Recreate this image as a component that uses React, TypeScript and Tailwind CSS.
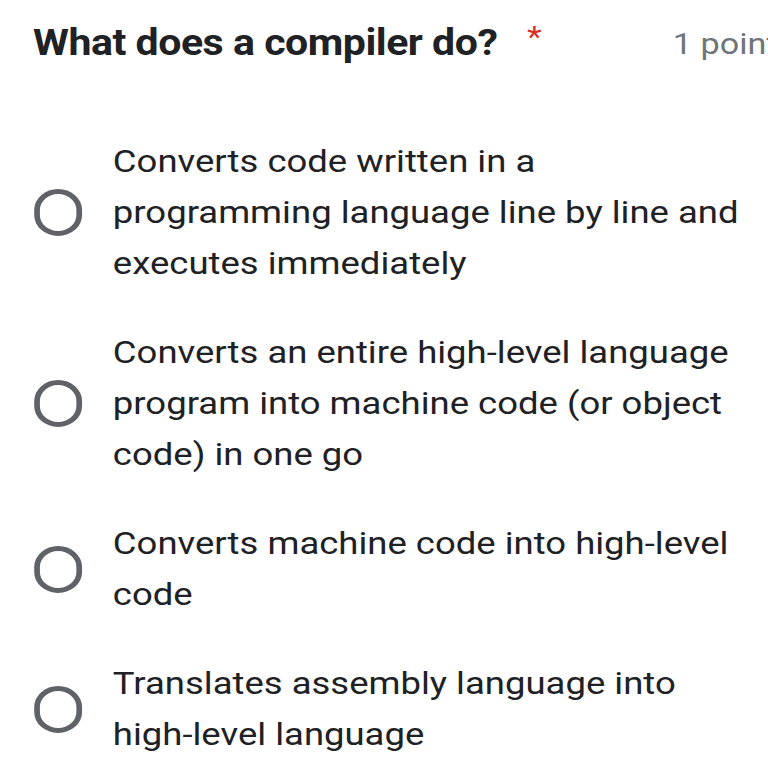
const options = [
  "Converts code written in a programming language line by line and executes immediately",
  "Converts an entire high-level language program into machine code (or object code) in one go",
  "Converts machine code into high-level code",
  "Translates assembly language into high-level language",
];

const Radio = () => (
  <div className="h-[47px] w-[42px] shrink-0 rounded-full border-[5px] border-[#5f6368]" />
);

export default function App() {
  return (
    <div className="h-[774px] w-[768px] overflow-hidden bg-white">
      {/* the screenshot is stretched sideways, so the form is drawn narrow and widened */}
      <div className="w-[674px] origin-top-left scale-x-[1.14] font-['Roboto',sans-serif] text-[#202124]">
        <div className="flex h-[86px] items-center whitespace-nowrap pl-[29px]">
          <h1 className="text-[36px] font-bold tracking-[-0.42px]">What does a compiler do?</h1>
          <span className="ml-[26px] self-start pt-[14px] text-[30px] text-[#d93025]">*</span>
          <span className="ml-[115px] text-[30px] text-[#70757a]">1 point</span>
        </div>
        <div className="flex flex-col gap-[38px] pt-[50px]">
          {options.map((opt) => (
            <div key={opt} className="flex items-center">
              <div className="flex w-[99px] shrink-0 justify-center pl-[2px]">
                <Radio />
              </div>
              <p className="w-[556px] text-[32px] leading-[51px]">{opt}</p>
            </div>
          ))}
        </div>
      </div>
    </div>
  );
}
